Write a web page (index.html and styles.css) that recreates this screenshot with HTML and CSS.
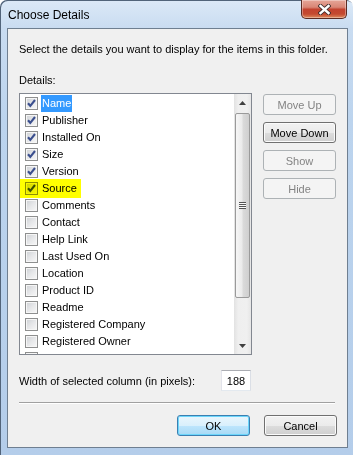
FILE: index.html
```html
<!DOCTYPE html>
<html lang="en">
<head>
  <meta charset="UTF-8">
  <meta name="viewport" content="width=device-width, initial-scale=1">
  <title>Choose Details</title>
  <link rel="stylesheet" href="styles.css">
</head>
<body>

  <div class="window">
    <div class="titlebar">
      <span class="title">Choose Details</span>
      <button class="close" title="Close">
        <svg width="13" height="11" viewBox="0 0 13 11">
          <path d="M2.5 2 L10.5 9 M10.5 2 L2.5 9" stroke="#3a2a2a" stroke-width="4.2" stroke-linecap="square"/>
          <path d="M2.5 2 L10.5 9 M10.5 2 L2.5 9" stroke="#ffffff" stroke-width="2.4" stroke-linecap="square"/>
        </svg>
      </button>
    </div>

    <div class="client">
      <p class="intro">Select the details you want to display for the items in this folder.</p>
      <div class="label">Details:</div>

      <div class="details">
        <div class="listbox">
          <ul class="items">
            <li class="item"><span class="box checked"><svg width="11" height="11" viewBox="0 0 11 11"><path d="M2 5.2 L4.3 7.8 L9 2" fill="none" stroke="#3b4f8e" stroke-width="2.1"/></svg></span><span class="name selected">Name</span></li>
            <li class="item"><span class="box checked"><svg width="11" height="11" viewBox="0 0 11 11"><path d="M2 5.2 L4.3 7.8 L9 2" fill="none" stroke="#3b4f8e" stroke-width="2.1"/></svg></span><span class="name">Publisher</span></li>
            <li class="item"><span class="box checked"><svg width="11" height="11" viewBox="0 0 11 11"><path d="M2 5.2 L4.3 7.8 L9 2" fill="none" stroke="#3b4f8e" stroke-width="2.1"/></svg></span><span class="name">Installed On</span></li>
            <li class="item"><span class="box checked"><svg width="11" height="11" viewBox="0 0 11 11"><path d="M2 5.2 L4.3 7.8 L9 2" fill="none" stroke="#3b4f8e" stroke-width="2.1"/></svg></span><span class="name">Size</span></li>
            <li class="item"><span class="box checked"><svg width="11" height="11" viewBox="0 0 11 11"><path d="M2 5.2 L4.3 7.8 L9 2" fill="none" stroke="#3b4f8e" stroke-width="2.1"/></svg></span><span class="name">Version</span></li>
            <li class="item marked"><span class="box checked"><svg width="11" height="11" viewBox="0 0 11 11"><path d="M2 5.2 L4.3 7.8 L9 2" fill="none" stroke="#3b4f8e" stroke-width="2.1"/></svg></span><span class="name">Source</span><span class="marker"></span></li>
            <li class="item"><span class="box"></span><span class="name">Comments</span></li>
            <li class="item"><span class="box"></span><span class="name">Contact</span></li>
            <li class="item"><span class="box"></span><span class="name">Help Link</span></li>
            <li class="item"><span class="box"></span><span class="name">Last Used On</span></li>
            <li class="item"><span class="box"></span><span class="name">Location</span></li>
            <li class="item"><span class="box"></span><span class="name">Product ID</span></li>
            <li class="item"><span class="box"></span><span class="name">Readme</span></li>
            <li class="item"><span class="box"></span><span class="name">Registered Company</span></li>
            <li class="item"><span class="box"></span><span class="name">Registered Owner</span></li>
            <li class="item"><span class="box"></span></li>
          </ul>
          <div class="scrollbar">
            <div class="arrow"><svg width="7" height="4" viewBox="0 0 7 4"><path d="M0 4 L3.5 0 L7 4 Z" fill="#404040"/></svg></div>
            <div class="track">
              <div class="thumb"><span class="grip"></span></div>
            </div>
            <div class="arrow"><svg width="7" height="4" viewBox="0 0 7 4"><path d="M0 0 L7 0 L3.5 4 Z" fill="#404040"/></svg></div>
          </div>
        </div>

        <div class="side-buttons">
          <button disabled>Move Up</button>
          <button>Move Down</button>
          <button disabled>Show</button>
          <button disabled>Hide</button>
        </div>
      </div>

      <div class="width-row">
        <label for="colWidth">Width of selected column (in pixels):</label>
        <input id="colWidth" type="text" value="188">
      </div>

      <hr>

      <div class="footer">
        <button class="default">OK</button>
        <button>Cancel</button>
      </div>
    </div>
  </div>

</body>
</html>
```

FILE: styles.css
```css
body {
  margin: 0;
  font-family: 'Liberation Sans', Arial, sans-serif;
  font-size: 11px;
  color: #000;
  background: #fff;
}
.window {
  width: 353px;
  height: 455px;
  box-sizing: border-box;
  display: flex;
  flex-direction: column;
  border-radius: 7px 7px 0 0;
  background: linear-gradient(to bottom, #dce9f7 0, #c9dcf1 28px, #bcd4ee 120px, #b4cdea 100%);
  box-shadow: inset 1px 1px 0 #52647a;
}
.titlebar {
  height: 28px;
  display: flex;
  align-items: flex-start;
  padding-left: 8px;
}
.title {
  margin-top: 7px;
  font-size: 12px;
  line-height: 16px;
}
.close {
  margin-left: auto;
  margin-right: 6px;
  width: 46px;
  height: 19px;
  padding: 0;
  display: flex;
  align-items: center;
  justify-content: center;
  border: 1px solid #5b2c24;
  border-top: none;
  border-radius: 0 0 5px 5px;
  background: linear-gradient(to bottom, #e6a698 0, #d98676 40%, #c3432f 52%, #c44a30 78%, #de8b5e 100%);
  box-shadow: inset 0 0 0 1px rgba(255, 255, 255, 0.35);
}
.client {
  flex: 1;
  margin: 0 5px 7px 7px;
  padding: 12px 10px 11px 11px;
  background: #f0f0f0;
  border: 1px solid #6f7f91;
  display: flex;
  flex-direction: column;
}
.intro {
  margin: 0;
  line-height: 16px;
}
.label {
  margin-top: 15px;
  line-height: 16px;
}
.details {
  display: flex;
  gap: 11px;
  margin-top: 5px;
}
.listbox {
  width: 233px;
  height: 262px;
  box-sizing: border-box;
  border: 1px solid #828790;
  background: #fff;
  display: flex;
}
.items {
  flex: 1;
  list-style: none;
  margin: 0;
  padding: 1px 0 0;
  overflow: hidden;
}
.item {
  height: 17px;
  display: flex;
  align-items: center;
  padding-left: 5px;
}
.box {
  width: 13px;
  height: 13px;
  box-sizing: border-box;
  flex-shrink: 0;
  display: flex;
  align-items: center;
  justify-content: center;
  border: 1px solid #8e8f8f;
  background: linear-gradient(135deg, #cdd0d4 0, #e6e7e9 50%, #f8f8f8 100%);
  box-shadow: inset 0 0 0 1px #f6f6f6;
}
.name {
  margin-left: 3px;
  padding: 0 1px;
  line-height: 17px;
  white-space: nowrap;
}
.name.selected {
  background: #3399ff;
  color: #fff;
}
.marked {
  position: relative;
}
.marker {
  position: absolute;
  left: -3px;
  top: -1px;
  width: 64px;
  height: 19px;
  background: #ffff00;
  mix-blend-mode: multiply;
}
.scrollbar {
  width: 17px;
  display: flex;
  flex-direction: column;
  background: linear-gradient(to right, #e2e2e2 0, #efefef 25%, #f0f0f0 75%, #e6e6e6 100%);
}
.arrow {
  height: 17px;
  display: flex;
  align-items: center;
  justify-content: center;
}
.track {
  flex: 1;
}
.thumb {
  height: 185px;
  box-sizing: border-box;
  margin: 2px 1px 0 1px;
  border: 1px solid #9a9a9a;
  border-radius: 2px;
  background: linear-gradient(to right, #f6f6f6 0, #ebebeb 45%, #dadada 55%, #cfcfcf 100%);
  display: flex;
  align-items: center;
  justify-content: center;
}
.grip {
  width: 7px;
  height: 7px;
  background: repeating-linear-gradient(to bottom, #555 0, #555 1px, #fafafa 1px, #fafafa 2px);
}
.side-buttons {
  display: flex;
  flex-direction: column;
  gap: 7px;
  padding-top: 1px;
}
button {
  width: 73px;
  height: 21px;
  padding: 0;
  font-family: inherit;
  font-size: 11px;
  color: #000;
  border: 1px solid #707070;
  border-radius: 3px;
  background: linear-gradient(to bottom, #f2f2f2 0, #ebebeb 50%, #dddddd 50%, #cfcfcf 100%);
  box-shadow: inset 0 0 0 1px #fbfbfb;
}
button:disabled {
  color: #838383;
  border-color: #adb2b5;
  background: #f4f4f4;
  box-shadow: none;
}
button.default {
  border-color: #3c7fb1;
  background: linear-gradient(to bottom, #eaf6fd 0, #d9f0fc 50%, #bee6fd 50%, #a7d9f5 100%);
  box-shadow: inset 0 0 0 1px #6cd6fb;
}
.width-row {
  width: 232px;
  margin-top: 15px;
  display: flex;
  align-items: center;
  justify-content: space-between;
}
.width-row input {
  width: 30px;
  height: 21px;
  box-sizing: border-box;
  padding: 0;
  font-family: inherit;
  font-size: 11px;
  text-align: center;
  border: 1px solid;
  border-color: #abadb3 #dbdfe6 #e3e9ef #e2e3ea;
  background: #fff;
}
hr {
  margin: 11px 2px 0 0;
  height: 0;
  border: 0;
  border-top: 1px solid #a0a0a0;
  border-bottom: 1px solid #fff;
}
.footer {
  margin-top: 11px;
  display: flex;
  justify-content: flex-end;
  gap: 14px;
}
```
